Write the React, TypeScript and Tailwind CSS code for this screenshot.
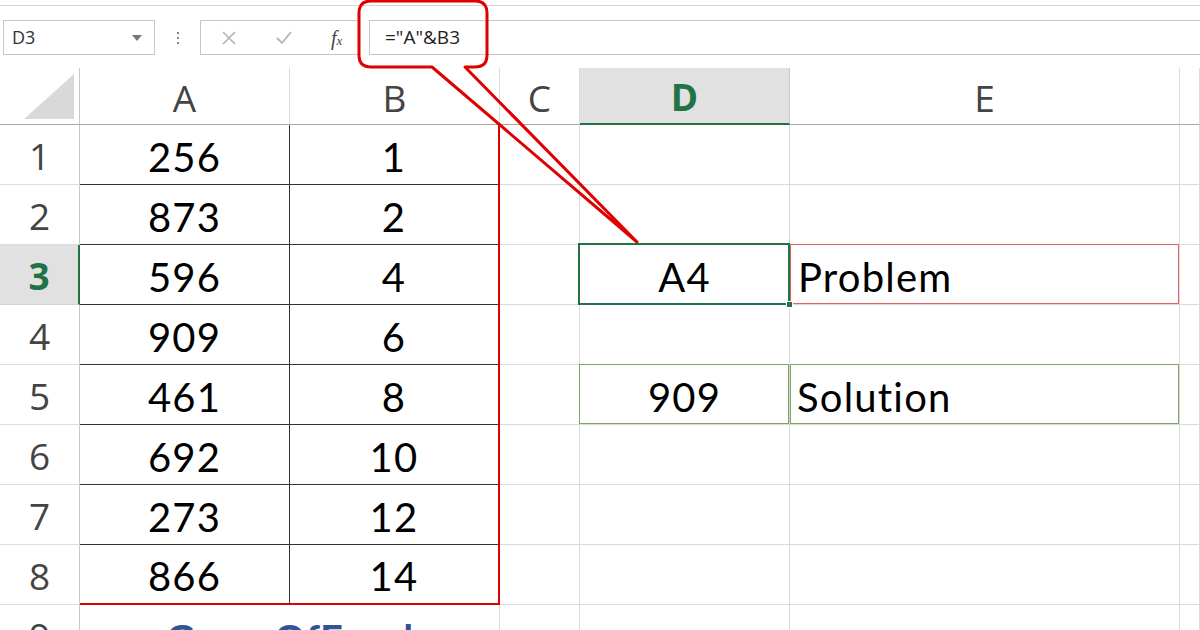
import React from "react";

const cellText = "font-['Lato',sans-serif] text-[40px] tracking-[0.03em] text-black leading-none pt-[4px]";
const hdrText = "font-['Open_Sans',sans-serif] text-[37px] text-[#444] leading-none pt-[2px]";

type DataRow = { n: number; a: string; b: string };

const data: DataRow[] = [
  { n: 1, a: "256", b: "1" },
  { n: 2, a: "873", b: "2" },
  { n: 3, a: "596", b: "4" },
  { n: 4, a: "909", b: "6" },
  { n: 5, a: "461", b: "8" },
  { n: 6, a: "692", b: "10" },
  { n: 7, a: "273", b: "12" },
  { n: 8, a: "866", b: "14" },
];

function Cell({
  w,
  rc = "border-r-[#dadada]",
  bc = "border-b-[#dadada]",
  className = "",
  children,
}: {
  w: string;
  rc?: string;
  bc?: string;
  className?: string;
  children?: React.ReactNode;
}) {
  return (
    <div
      className={`relative shrink-0 box-border h-full border-r border-b flex items-center ${w} ${rc} ${bc} ${className}`}
    >
      {children}
    </div>
  );
}

function RowHeader({ n, active }: { n: number; active?: boolean }) {
  if (active) {
    return (
      <Cell
        w="w-[80px]"
        rc="border-r-2 border-r-[#217346]"
        bc="border-b-[#d4d4d4]"
        className="justify-center bg-[#e1e1e1]"
      >
        <span className={`${hdrText} !text-[#217346] font-bold`}>{n}</span>
      </Cell>
    );
  }
  return (
    <Cell w="w-[80px]" rc="border-r-[#c8c8c8]" bc="border-b-[#dcdcdc]" className="justify-center">
      <span className={hdrText}>{n}</span>
    </Cell>
  );
}

function FormulaBar() {
  return (
    <div className="h-[68px] bg-white">
      <div className="h-[6px] border-b border-[#d6d6d6]" />
      <div className="flex items-start pt-[14px]">
        <div className="ml-[3px] w-[152px] h-[35px] border border-[#c6c6c6] flex items-center justify-between pl-[8px] pr-[12px]">
          <span className="font-['Open_Sans',sans-serif] text-[18px] text-[#333]">D3</span>
          <svg width="10" height="6" viewBox="0 0 10 6">
            <path d="M0 0 H10 L5 6 Z" fill="#777" />
          </svg>
        </div>
        <div className="w-[45px] h-[35px] flex flex-col items-center justify-center gap-[3px]">
          <span className="w-[2px] h-[2px] bg-[#888]" />
          <span className="w-[2px] h-[2px] bg-[#888]" />
          <span className="w-[2px] h-[2px] bg-[#888]" />
        </div>
        <div className="w-[160px] h-[35px] border border-[#c6c6c6] flex items-center pl-[20px] gap-[38px]">
          <svg width="16" height="16" viewBox="0 0 16 16">
            <path d="M2 2 L14 14 M14 2 L2 14" stroke="#b4b4b4" strokeWidth="1.6" />
          </svg>
          <svg width="18" height="16" viewBox="0 0 18 16">
            <path d="M2 8 L7 13 L16 2" stroke="#b4b4b4" strokeWidth="1.8" fill="none" />
          </svg>
          <span className="font-['Liberation_Serif',serif] italic text-[20px] text-[#444] leading-none">
            f<span className="text-[13px]">x</span>
          </span>
        </div>
        <div className="ml-[9px] flex-1 h-[35px] border-t border-b border-l border-[#c6c6c6] flex items-center pl-[15px]">
          <span className="font-['Open_Sans',sans-serif] text-[19px] text-[#222]">="A"&amp;B3</span>
        </div>
      </div>
    </div>
  );
}

function ColumnHeaders() {
  const hdr = "border-r-[#dcdcdc]";
  const hb = "border-b-[#a8a8a8]";
  return (
    <div className="flex h-[57px]">
      <Cell w="w-[80px]" rc="border-r-[#c8c8c8]" bc={hb} className="justify-end items-end pr-[5px] pb-[5px]">
        <div className="w-[50px] h-[45px] bg-[#d9d9d9] [clip-path:polygon(100%_0,100%_100%,0_100%)]" />
      </Cell>
      <Cell w="w-[210px]" rc={hdr} bc={hb} className="justify-center">
        <span className={hdrText}>A</span>
      </Cell>
      <Cell w="w-[210px]" rc={hdr} bc={hb} className="justify-center">
        <span className={hdrText}>B</span>
      </Cell>
      <Cell w="w-[80px]" rc={hdr} bc={hb} className="justify-center">
        <span className={hdrText}>C</span>
      </Cell>
      <Cell
        w="w-[210px]"
        rc="border-r-[#c8c8c8]"
        bc="border-b-2 border-b-[#217346]"
        className="justify-center bg-[#e1e1e1]"
      >
        <span className={`${hdrText} !text-[#217346] font-bold`}>D</span>
      </Cell>
      <Cell w="w-[390px]" rc={hdr} bc={hb} className="justify-center">
        <span className={hdrText}>E</span>
      </Cell>
      <Cell w="flex-1" rc={hdr} bc={hb} />
    </div>
  );
}

function DataRowView({ row }: { row: DataRow }) {
  const last = row.n === 8;
  const bottom = last ? "border-b-2 border-b-[#e00000]" : "border-b-[#333]";
  return (
    <div className="flex h-[60px]">
      <RowHeader n={row.n} active={row.n === 3} />
      <Cell w="w-[210px]" rc="border-r-[#333]" bc={bottom} className="justify-center">
        <span className={cellText}>{row.a}</span>
      </Cell>
      <Cell w="w-[210px]" rc="border-r-2 border-r-[#e00000]" bc={bottom} className="justify-center">
        <span className={cellText}>{row.b}</span>
      </Cell>
      <Cell w="w-[80px]" />
      {row.n === 3 ? (
        <Cell w="w-[210px]" className="justify-center">
          <span className={cellText}>A4</span>
          <div className="absolute z-10 -top-[2px] -left-[2px] -right-[1px] -bottom-[1px] border-2 border-[#217346]" />
          <div className="absolute z-20 -right-[4px] -bottom-[4px] w-[7px] h-[7px] bg-[#217346] border border-white" />
        </Cell>
      ) : row.n === 5 ? (
        <Cell w="w-[210px]" className="justify-center">
          <span className={cellText}>909</span>
          <div className="absolute -top-px -left-px right-0 bottom-0 border border-[#7ea465]" />
        </Cell>
      ) : (
        <Cell w="w-[210px]" />
      )}
      {row.n === 3 ? (
        <Cell w="w-[390px]" className="pl-[8px]">
          <span className={cellText}>Problem</span>
          <div className="absolute -top-px left-0 right-0 bottom-0 border border-[#e46262]" />
        </Cell>
      ) : row.n === 5 ? (
        <Cell w="w-[390px]" className="pl-[7px]">
          <span className={cellText}>Solution</span>
          <div className="absolute -top-px left-0 right-0 bottom-0 border border-[#7ea465]" />
        </Cell>
      ) : (
        <Cell w="w-[390px]" />
      )}
      <Cell w="flex-1" />
    </div>
  );
}

function Callout() {
  return (
    <svg
      className="absolute top-0 left-0 pointer-events-none"
      width="1200"
      height="630"
      viewBox="0 0 1200 630"
    >
      <path
        d="M432 67 H371 Q359 67 359 55 V13 Q359 1 371 1 H475 Q487 1 487 13 V55 Q487 67 475 67 H465 L637 242 Z"
        fill="none"
        stroke="#e00000"
        strokeWidth="3"
        strokeLinejoin="round"
      />
    </svg>
  );
}

export default function App() {
  return (
    <div className="relative w-[1200px] h-[630px] overflow-hidden bg-white">
      <FormulaBar />
      <ColumnHeaders />
      {data.map((r) => (
        <DataRowView key={r.n} row={r} />
      ))}
      <div className="flex h-[60px]">
        <RowHeader n={9} />
        <Cell w="w-[420px]" rc="border-r-[#dadada]" className="justify-center">
          <span className="font-['Lato',sans-serif] text-[40px] font-bold text-[#2f5597] leading-none pt-[8px]">
            GreenOfExcel
          </span>
        </Cell>
        <Cell w="w-[80px]" />
        <Cell w="w-[210px]" />
        <Cell w="w-[390px]" />
        <Cell w="flex-1" />
      </div>
      <Callout />
    </div>
  );
}
